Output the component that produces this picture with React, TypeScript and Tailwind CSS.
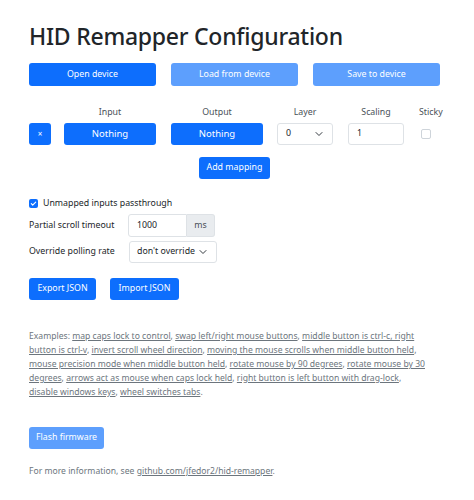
import React from "react";

const Chevron = () => (
  <svg width="8" height="8" viewBox="0 0 16 16" className="shrink-0">
    <path d="M2 5l6 6 6-6" fill="none" stroke="#343a40" strokeWidth="2" strokeLinecap="round" strokeLinejoin="round" />
  </svg>
);

const links = [
  "map caps lock to control",
  "swap left/right mouse buttons",
  "middle button is ctrl-c, right button is ctrl-v",
  "invert scroll wheel direction",
  "moving the mouse scrolls when middle button held",
  "mouse precision mode when middle button held",
  "rotate mouse by 90 degrees",
  "rotate mouse by 30 degrees",
  "arrows act as mouse when caps lock held",
  "right button is left button with drag-lock",
  "disable windows keys",
  "wheel switches tabs",
];

export default function App() {
  return (
    <div
      className="bg-white text-[#212529] w-[474px] h-[500px] overflow-hidden pl-[29px] pr-[34px]"
      style={{ fontFamily: '"Noto Sans", "Open Sans", sans-serif' }}
    >
      <h1 className="pt-[20px] text-[23px] leading-[32px] font-medium tracking-[-0.25px]">HID Remapper Configuration</h1>

      <div className="mt-[11px] flex gap-[15px] text-[8.8px]">
        <button className="w-[127px] h-[23px] rounded-[3px] bg-[#0d6efd] text-white">Open device</button>
        <button className="w-[127px] h-[23px] rounded-[3px] bg-[#5d9ffd] text-white">Load from device</button>
        <button className="w-[127px] h-[23px] rounded-[3px] bg-[#5d9ffd] text-white">Save to device</button>
      </div>

      <div className="mt-[19px] flex text-[8.8px] text-[#495057] leading-[14px]">
        <div className="w-[35px] shrink-0" />
        <div className="w-[92px] shrink-0 text-center">Input</div>
        <div className="w-[15px] shrink-0" />
        <div className="w-[92px] shrink-0 text-center">Output</div>
        <div className="w-[14px] shrink-0" />
        <div className="w-[56px] shrink-0 text-center">Layer</div>
        <div className="w-[15px] shrink-0" />
        <div className="w-[56px] shrink-0 text-center">Scaling</div>
        <div className="shrink-0 pl-[15px] whitespace-nowrap">Sticky</div>
      </div>

      <div className="mt-[4px] flex items-center text-[8.8px]">
        <button className="w-[22px] h-[22px] rounded-[3px] bg-[#0d6efd] text-white text-[8px] leading-none">×</button>
        <div className="w-[13px]" />
        <button className="w-[92px] h-[22px] rounded-[3px] bg-[#0d6efd] text-white text-[9.5px]">Nothing</button>
        <div className="w-[15px]" />
        <button className="w-[92px] h-[22px] rounded-[3px] bg-[#0d6efd] text-white text-[9.5px]">Nothing</button>
        <div className="w-[14px]" />
        <div className="w-[56px] h-[22px] rounded-[3px] border border-[#dee2e6] flex items-center justify-between pl-[8px] pr-[9px] text-[#212529]">
          <span>0</span>
          <Chevron />
        </div>
        <div className="w-[15px]" />
        <div className="w-[56px] h-[22px] rounded-[3px] border border-[#dee2e6] flex items-center pl-[8px] text-[#212529]">1</div>
        <div className="w-[17px]" />
        <div className="w-[10px] h-[10px] rounded-[2px] border border-[#ced4da] bg-white" />
      </div>

      <div className="mt-[12px] flex justify-center">
        <button className="w-[71px] h-[22px] rounded-[3px] bg-[#0d6efd] text-white text-[8.8px]">Add mapping</button>
      </div>

      <div className="mt-[17px] flex items-center gap-[5px] text-[8.8px] leading-[14px] text-[#212529]">
        <span className="w-[9px] h-[9px] rounded-[2px] bg-[#0d6efd] flex items-center justify-center">
          <svg width="7" height="7" viewBox="0 0 16 16">
            <path d="M3 8.5l3.2 3.2L13 5" fill="none" stroke="white" strokeWidth="2.6" strokeLinecap="round" strokeLinejoin="round" />
          </svg>
        </span>
        <span>Unmapped inputs passthrough</span>
      </div>

      <div className="mt-[4px] flex items-center text-[8.8px]">
        <span className="w-[99px]">Partial scroll timeout</span>
        <div className="flex h-[23px]">
          <div className="w-[59px] border border-[#dee2e6] rounded-l-[3px] flex items-center pl-[8px]">1000</div>
          <div className="w-[28px] border border-l-0 border-[#dee2e6] rounded-r-[3px] bg-[#e9ecef] flex items-center justify-center text-[#495057]">ms</div>
        </div>
      </div>

      <div className="mt-[4px] flex items-center text-[8.8px]">
        <span className="w-[100px]">Override polling rate</span>
        <div className="w-[88px] h-[22px] rounded-[3px] border border-[#dee2e6] flex items-center justify-between pl-[7px] pr-[9px]">
          <span>don't override</span>
          <Chevron />
        </div>
      </div>

      <div className="mt-[15px] flex gap-[14px] text-[8.8px]">
        <button className="w-[67px] h-[22px] rounded-[3px] bg-[#0d6efd] text-white">Export JSON</button>
        <button className="w-[69px] h-[22px] rounded-[3px] bg-[#0d6efd] text-white">Import JSON</button>
      </div>

      <p className="mt-[29px] text-[8.6px] leading-[14px] text-[#6c757d]">
        Examples:{" "}
        {links.map((l, i) => (
          <React.Fragment key={l}>
            <a className="underline text-[#6c757d]">{l}</a>
            {i < links.length - 1 ? ", " : "."}
            {l === "right button is left button with drag-lock" ? <br /> : null}
          </React.Fragment>
        ))}
      </p>

      <button className="mt-[28px] w-[75px] h-[22px] rounded-[3px] bg-[#5d9ffd] text-white text-[8.8px]">Flash firmware</button>

      <p className="mt-[15px] text-[8.6px] leading-[14px] text-[#6c757d]">
        For more information, see <a className="underline">github.com/jfedor2/hid-remapper</a>.
      </p>
    </div>
  );
}
